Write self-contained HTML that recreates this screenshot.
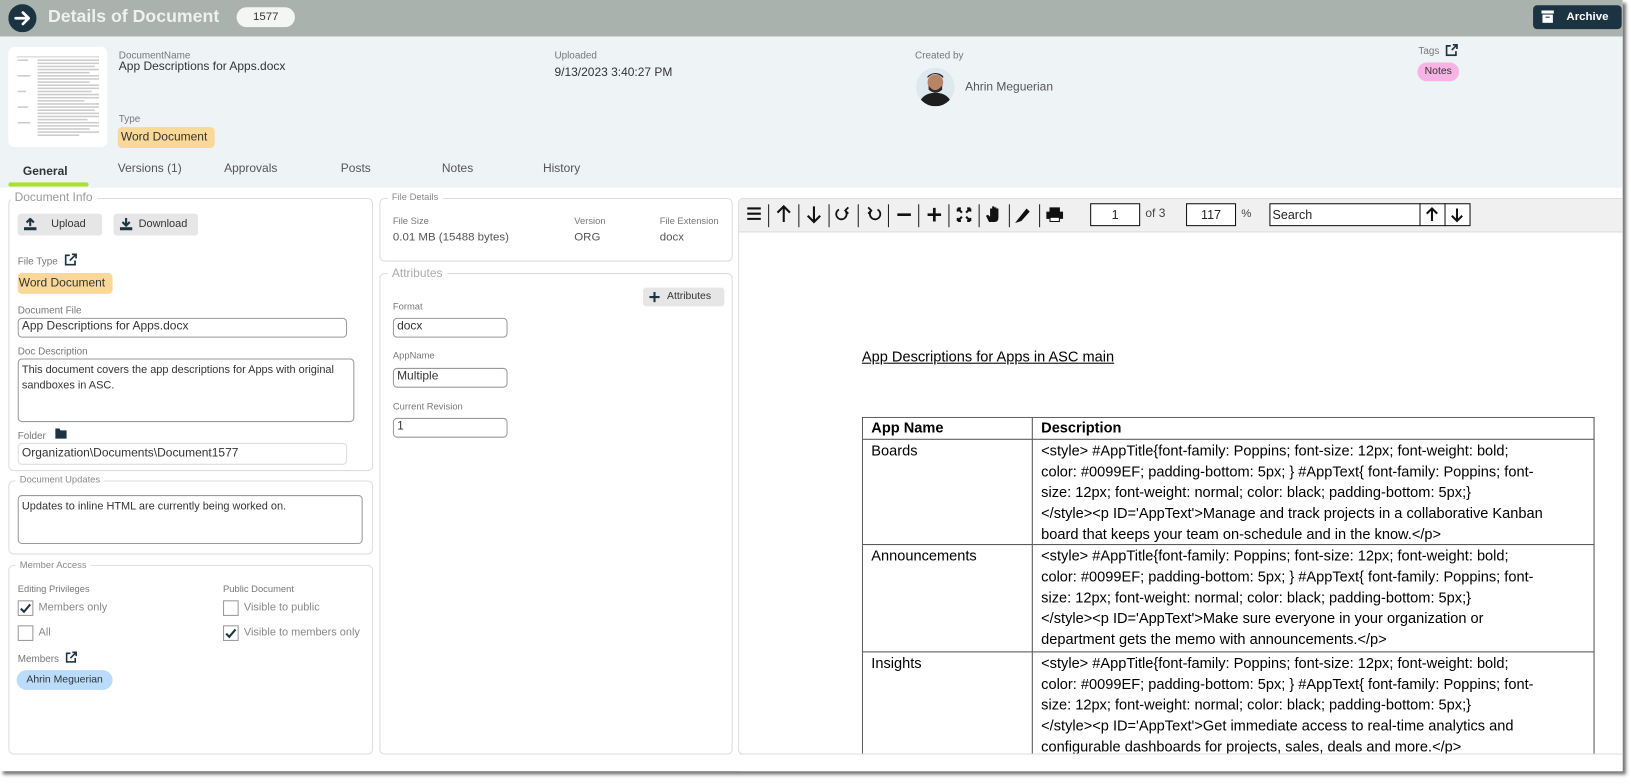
<!DOCTYPE html>
<html><head><meta charset="utf-8"><style>
*{box-sizing:border-box;margin:0;padding:0}
html,body{width:1631px;height:784px;overflow:hidden;background:#fff;font-family:"Liberation Sans",sans-serif;color:#333}
#w{position:absolute;left:0;top:0;width:1565px;height:752px;transform:scale(1.0422);transform-origin:0 0}
.a{position:absolute}
#frame{position:absolute;left:0;top:0;width:1557px;height:740px;background:#fff;box-shadow:3px 3px 3px #777;overflow:hidden}
.lbl{position:absolute;font-size:9.5px;color:#777;white-space:nowrap}
.val{position:absolute;font-size:12px;color:#333;white-space:nowrap}
.box{position:absolute;border:1px solid #ddd;border-radius:5px}
.lg{position:absolute;background:#fff;padding:0 4px;font-size:9.5px;color:#888;white-space:nowrap}
.inp{position:absolute;border:1px solid #999;border-radius:4px;font-size:11.5px;padding:1px 3px;color:#333;white-space:nowrap;background:#fff}
.btn{position:absolute;background:#e6e6e6;border-radius:3px;font-size:10.5px;color:#333}
.chk{position:absolute;width:15px;height:15px;border:1px solid #999;background:#fff}
td,th{border:1.5px solid #555;vertical-align:top;text-align:left;padding:0 8px;font-size:14px;line-height:20px;white-space:nowrap}
</style></head><body><div id="w"><div id="frame">
<div class="a" style="left:0;top:0;width:1557px;height:35px;background:#a9b2ac"></div>
<svg class="a" style="left:8px;top:4px" width="27" height="27" viewBox="0 0 27 27"><circle cx="13.5" cy="13.5" r="13.5" fill="#1c3341"/><path d="M7 13.5h12M14 8l5.5 5.5L14 19" stroke="#fff" stroke-width="2.6" fill="none" stroke-linecap="round" stroke-linejoin="round"/></svg>
<div class="a" style="left:46px;top:6px;font-size:17px;font-weight:bold;color:#eef1f0">Details of Document</div>
<div class="a" style="left:227px;top:7px;width:56px;height:19px;background:#f4f6f6;border-radius:10px;font-size:11px;text-align:center;line-height:19px;color:#333">1577</div>
<div class="a" style="left:1471px;top:5px;width:85px;height:23px;background:#1c3341;border-radius:4px"></div>
<svg class="a" style="left:1479px;top:10px" width="12" height="12"><rect x="0" y="0" width="12" height="3" fill="#fff"/><rect x="1" y="4" width="10" height="8" fill="#fff"/><rect x="4" y="6" width="4" height="1" fill="#1c3341"/></svg>
<div class="a" style="left:1503px;top:10px;font-size:11px;font-weight:bold;color:#fff">Archive</div>
<div class="a" style="left:0;top:35px;width:1557px;height:145px;background:#eef3f6"></div>
<div class="a" style="left:8px;top:45px;width:95px;height:96px;background:#fff;border-radius:6px;padding:9px 8px">
<svg width="79" height="80"><g fill="#ccc"><rect x="0" y="0" width="79" height="1"/>
<rect x="20" y="3" width="59" height="1.5"/><rect x="20" y="6" width="59" height="1.5"/><rect x="20" y="9" width="55" height="1.5"/><rect x="20" y="12" width="59" height="1.5"/><rect x="20" y="15" width="50" height="1.5"/><rect x="20" y="18" width="59" height="1.5"/><rect x="20" y="21" width="59" height="1.5"/><rect x="20" y="24" width="50" height="1.5"/><rect x="20" y="27" width="59" height="1.5"/><rect x="20" y="30" width="59" height="1.5"/><rect x="20" y="33" width="52" height="1.5"/><rect x="20" y="36" width="59" height="1.5"/><rect x="20" y="39" width="59" height="1.5"/><rect x="20" y="42" width="45" height="1.5"/><rect x="20" y="45" width="59" height="1.5"/><rect x="20" y="48" width="59" height="1.5"/><rect x="20" y="51" width="55" height="1.5"/><rect x="20" y="54" width="59" height="1.5"/><rect x="20" y="57" width="59" height="1.5"/><rect x="20" y="60" width="48" height="1.5"/><rect x="20" y="63" width="59" height="1.5"/><rect x="20" y="66" width="59" height="1.5"/><rect x="20" y="69" width="50" height="1.5"/><rect x="20" y="72" width="59" height="1.5"/><rect x="20" y="75" width="40" height="1.5"/>
<rect x="1" y="3" width="10" height="1.5"/><rect x="1" y="18" width="12" height="1.5"/><rect x="1" y="33" width="8" height="1.5"/><rect x="1" y="48" width="10" height="1.5"/><rect x="1" y="63" width="12" height="1.5"/></g></svg></div>
<div class="lbl" style="left:114px;top:48px">DocumentName</div>
<div class="val" style="left:114px;top:58px;font-size:11.5px">App Descriptions for Apps.docx</div>
<div class="lbl" style="left:114px;top:109px">Type</div>
<div class="a" style="left:113px;top:122px;width:93px;height:20px;background:#fad898;border-radius:4px;font-size:11.5px;line-height:20px;padding-left:3px">Word Document</div>
<div class="lbl" style="left:532px;top:48px">Uploaded</div>
<div class="val" style="left:532px;top:64px;font-size:11.5px">9/13/2023 3:40:27 PM</div>
<div class="lbl" style="left:878px;top:48px">Created by</div>
<svg class="a" style="left:879px;top:65px" width="37" height="37"><defs><clipPath id="c"><circle cx="18.5" cy="18.5" r="18.5"/></clipPath></defs><g clip-path="url(#c)"><rect width="37" height="37" fill="#dde8ef"/><circle cx="18.5" cy="14" r="7.5" fill="#b98466"/><path d="M11 10q7-8 15 0v-2q-7-6-15 0z" fill="#222"/><path d="M12 17q6 9 13 0v4q-6 6-13 0z" fill="#2a2a2a"/><path d="M2 37q3-13 16.5-13T35 37z" fill="#1e1e1e"/></g></svg>
<div class="val" style="left:926px;top:78px;font-size:11.5px;color:#555">Ahrin Meguerian</div>
<div class="lbl" style="left:1361px;top:44px">Tags</div>
<svg class="a" style="left:1387px;top:42px" width="12" height="12" viewBox="0 0 12 12"><path d="M5 2H1v9h9V7" stroke="#1c3341" stroke-width="1.6" fill="none"/><path d="M6 6l5-5M7 1h4v4" stroke="#1c3341" stroke-width="1.6" fill="none"/></svg>
<div class="a" style="left:1360px;top:60px;width:40px;height:18px;background:#f6b3e3;border-radius:9px;font-size:10px;text-align:center;line-height:18px">Notes</div>
<div class="a" style="left:22px;top:159px;font-size:11.5px;font-weight:bold;color:#333">General</div>
<div class="a" style="left:8px;top:175px;width:77px;height:4px;background:#a8e22c;border-radius:2px"></div>
<div class="a" style="left:113px;top:156px;font-size:11.5px;color:#555">Versions (1)</div>
<div class="a" style="left:215px;top:156px;font-size:11.5px;color:#555">Approvals</div>
<div class="a" style="left:327px;top:156px;font-size:11.5px;color:#555">Posts</div>
<div class="a" style="left:424px;top:156px;font-size:11.5px;color:#555">Notes</div>
<div class="a" style="left:521px;top:156px;font-size:11.5px;color:#555">History</div>

<div class="box" style="left:8px;top:190px;width:350px;height:262px"></div>
<div class="lg" style="left:10px;top:184px;font-size:11.5px;color:#999">Document Info</div>
<div class="btn" style="left:17px;top:205px;width:81px;height:21px"><svg class="a" style="left:6px;top:4px" width="12" height="12"><path d="M6 1v7M2.5 4.5L6 1l3.5 3.5" stroke="#1c3341" stroke-width="2" fill="none"/><rect x="0" y="9" width="12" height="3" fill="#1c3341"/></svg><span class="a" style="left:32px;top:4px">Upload</span></div>
<div class="btn" style="left:109px;top:205px;width:81px;height:21px"><svg class="a" style="left:6px;top:4px" width="12" height="12"><path d="M6 0v7M2.5 4L6 7.5 9.5 4" stroke="#1c3341" stroke-width="2" fill="none"/><rect x="0" y="9" width="12" height="3" fill="#1c3341"/></svg><span class="a" style="left:24px;top:4px">Download</span></div>
<div class="lbl" style="left:17px;top:246px">File Type</div>
<svg class="a" style="left:62px;top:243px" width="12" height="12" viewBox="0 0 12 12"><path d="M5 2H1v9h9V7" stroke="#1c3341" stroke-width="1.6" fill="none"/><path d="M5 7l6-6" stroke="#1c3341" stroke-width="1.6"/><path d="M7 1h4v4" stroke="#1c3341" stroke-width="1.6" fill="none"/></svg>
<div class="a" style="left:17px;top:262px;width:91px;height:20px;background:#fad898;border-radius:4px;font-size:11.5px;line-height:20px;padding-left:1px">Word Document</div>
<div class="lbl" style="left:17px;top:293px">Document File</div>
<div class="inp" style="left:17px;top:305px;width:316px;height:19px">App Descriptions for Apps.docx</div>
<div class="lbl" style="left:17px;top:332px">Doc Description</div>
<div class="inp" style="left:17px;top:344px;width:323px;height:61px;font-size:10.5px;line-height:15px;white-space:normal;padding-top:3px">This document covers the app descriptions for Apps with original sandboxes in ASC.</div>
<div class="lbl" style="left:17px;top:413px">Folder</div>
<svg class="a" style="left:53px;top:411px" width="11" height="10"><path d="M0 0h4l1 2h6v8H0z" fill="#1c3341"/></svg>
<div class="inp" style="left:17px;top:425px;width:316px;height:21px;border-color:#ddd;line-height:17px">Organization\Documents\Document1577</div>
<div class="box" style="left:8px;top:461px;width:350px;height:71px"></div>
<div class="lg" style="left:15px;top:455px;font-size:9px">Document Updates</div>
<div class="inp" style="left:17px;top:475px;width:331px;height:47px;font-size:10.5px;padding-top:4px">Updates to inline HTML are currently being worked on.</div>
<div class="box" style="left:8px;top:542px;width:350px;height:182px"></div>
<div class="lg" style="left:15px;top:537px;font-size:9px">Member Access</div>
<div class="lbl" style="left:17px;top:560px;font-size:9px">Editing Privileges</div>
<div class="lbl" style="left:214px;top:560px;font-size:9px">Public Document</div>
<div class="chk" style="left:17px;top:576px"><svg width="13" height="13" style="position:absolute;left:0;top:0"><path d="M2 7l3 3 6-7" stroke="#1c3341" stroke-width="2" fill="none"/></svg></div>
<div class="lbl" style="left:37px;top:577px;font-size:10.5px;color:#888">Members only</div>
<div class="chk" style="left:17px;top:600px"></div>
<div class="lbl" style="left:37px;top:601px;font-size:10.5px;color:#888">All</div>
<div class="chk" style="left:214px;top:576px"></div>
<div class="lbl" style="left:234px;top:577px;font-size:10.5px;color:#888">Visible to public</div>
<div class="chk" style="left:214px;top:600px"><svg width="13" height="13" style="position:absolute;left:0;top:0"><path d="M2 7l3 3 6-7" stroke="#1c3341" stroke-width="2" fill="none"/></svg></div>
<div class="lbl" style="left:234px;top:601px;font-size:10.5px;color:#888">Visible to members only</div>
<div class="lbl" style="left:17px;top:627px">Members</div>
<svg class="a" style="left:63px;top:625px" width="11" height="11" viewBox="0 0 12 12"><path d="M5 2H1v9h9V7" stroke="#1c3341" stroke-width="1.7" fill="none"/><path d="M5 7l6-6M7 1h4v4" stroke="#1c3341" stroke-width="1.7" fill="none"/></svg>
<div class="a" style="left:16px;top:643px;width:92px;height:19px;background:#b9dcfa;border-radius:10px;font-size:10px;text-align:center;line-height:19px">Ahrin Meguerian</div>

<div class="box" style="left:364px;top:190px;width:339px;height:61px"></div>
<div class="lg" style="left:372px;top:184px;font-size:9px">File Details</div>
<div class="lbl" style="left:377px;top:207px;font-size:9px">File Size</div>
<div class="val" style="left:377px;top:222px;font-size:11px;color:#555">0.01 MB (15488 bytes)</div>
<div class="lbl" style="left:551px;top:207px;font-size:9px">Version</div>
<div class="val" style="left:551px;top:222px;font-size:11px;color:#555">ORG</div>
<div class="lbl" style="left:633px;top:207px;font-size:9px">File Extension</div>
<div class="val" style="left:633px;top:222px;font-size:11px;color:#555">docx</div>
<div class="box" style="left:364px;top:262px;width:339px;height:462px"></div>
<div class="lg" style="left:372px;top:257px;font-size:11.5px;color:#aaa">Attributes</div>
<div class="btn" style="left:617px;top:276px;width:78px;height:18px;font-size:10px"><svg class="a" style="left:6px;top:4px" width="10" height="10"><path d="M5 0v10M0 5h10" stroke="#1c3341" stroke-width="2"/></svg><span class="a" style="left:23px;top:3px">Attributes</span></div>
<div class="lbl" style="left:377px;top:289px;font-size:9px">Format</div>
<div class="inp" style="left:377px;top:305px;width:110px;height:19px">docx</div>
<div class="lbl" style="left:377px;top:336px;font-size:9px">AppName</div>
<div class="inp" style="left:377px;top:353px;width:110px;height:19px">Multiple</div>
<div class="lbl" style="left:377px;top:385px;font-size:9px">Current Revision</div>
<div class="inp" style="left:377px;top:401px;width:110px;height:19px">1</div>

<div class="box" style="left:708px;top:190px;width:849px;height:534px;border-right:none;border-radius:5px 0 0 5px;overflow:hidden">
<div class="a" style="left:0;top:0;width:849px;height:32px;background:#f0f0f0;border-bottom:1px solid #ddd"></div>
<div class="a" style="left:2px;top:33px;width:847px;height:501px;background:#fff"></div>
</div>
<svg class="a" style="left:0;top:0" width="1557" height="230">
<g stroke="#111" fill="none" stroke-width="2">
<path d="M717 200h13M717 205h13M717 210h13"/>
<path d="M752 213V199M746 204l6-6 6 6"/>
<path d="M781 198v14M775 207l6 6 6-6"/>
<path d="M805 201a5 5 0 1 0 6 1M814 199l-3 3 3 3" stroke-width="1.7"/>
<path d="M842 201a5 5 0 1 1-6 1M833 199l3 3-3 3" stroke-width="1.7"/>
<path d="M861 206h13" stroke-width="2.6"/>
<path d="M890 206h13M896.5 199.5v13" stroke-width="2.6"/>
<path d="M919 200l4 4M931 200l-4 4M919 212l4-4M931 212l-4-4M919 200h3M919 200v3M931 200h-3M931 200v3M919 212h3M919 212v-3M931 212h-3M931 212v-3"/>
</g>
<path d="M949 213l-3-6 2-1 2 2v-8h2v5-7h2v7-6h2v6-5h2v9q0 4-4 4z" fill="#111"/>
<path d="M977 210l8-10 3 3-8 9zM974 214l3-4 3 2z" fill="#111"/>
<path d="M1007 199h10v4h-10zM1004 203h16v7h-16zM1007 208h10v5h-10z" fill="#111"/><rect x="1008" y="209" width="8" height="3" fill="#fff"/>
<g fill="#222"><rect x="737" y="196" width="1" height="22"/><rect x="766" y="196" width="1" height="22"/><rect x="795" y="196" width="1" height="22"/><rect x="823" y="196" width="1" height="22"/><rect x="852" y="196" width="1" height="22"/><rect x="881" y="196" width="1" height="22"/><rect x="910" y="196" width="1" height="22"/><rect x="939" y="196" width="1" height="22"/><rect x="968" y="196" width="1" height="22"/><rect x="997" y="196" width="1" height="22"/></g>
<rect x="1046.5" y="195.5" width="47" height="21" fill="#fff" stroke="#111"/>
<rect x="1138.5" y="195.5" width="47" height="21" fill="#fff" stroke="#111"/>
<rect x="1218.5" y="195.5" width="192" height="21" fill="#fff" stroke="#111"/>
<path d="M1362.5 195v22M1386.5 195v22" stroke="#111"/>
<path d="M1374 212v-11M1369 205l5-5 5 5M1398 200v11M1393 207l5 5 5-5" stroke="#111" stroke-width="2" fill="none"/>
</svg>
<div class="a" style="left:1046px;top:199px;width:48px;text-align:center;font-size:12px;color:#222">1</div>
<div class="a" style="left:1099px;top:199px;font-size:11.5px;color:#444">of 3</div>
<div class="a" style="left:1138px;top:199px;width:48px;text-align:center;font-size:12px;color:#222">117</div>
<div class="a" style="left:1191px;top:199px;font-size:11px;color:#444">%</div>
<div class="a" style="left:1221px;top:199px;font-size:12px;color:#222">Search</div>
<div class="a" style="left:827px;top:334px;font-size:14px;text-decoration:underline;color:#000;white-space:nowrap">App Descriptions for Apps in ASC main</div>
<div class="a" style="left:827px;top:400px;width:704px;height:340px;overflow:hidden">
<table style="border-collapse:collapse;width:703px;color:#000">
<tr><th style="width:163px;height:21px;line-height:18px">App Name</th><th style="line-height:18px">Description</th></tr>
<tr><td style="height:100px">Boards</td><td>&lt;style&gt; #AppTitle{font-family: Poppins; font-size: 12px; font-weight: bold;<br>color: #0099EF; padding-bottom: 5px; } #AppText{ font-family: Poppins; font-<br>size: 12px; font-weight: normal; color: black; padding-bottom: 5px;}<br>&lt;/style&gt;&lt;p ID='AppText'&gt;Manage and track projects in a collaborative Kanban<br>board that keeps your team on-schedule and in the know.&lt;/p&gt;</td></tr>
<tr><td style="height:103px">Announcements</td><td>&lt;style&gt; #AppTitle{font-family: Poppins; font-size: 12px; font-weight: bold;<br>color: #0099EF; padding-bottom: 5px; } #AppText{ font-family: Poppins; font-<br>size: 12px; font-weight: normal; color: black; padding-bottom: 5px;}<br>&lt;/style&gt;&lt;p ID='AppText'&gt;Make sure everyone in your organization or<br>department gets the memo with announcements.&lt;/p&gt;</td></tr>
<tr><td>Insights</td><td>&lt;style&gt; #AppTitle{font-family: Poppins; font-size: 12px; font-weight: bold;<br>color: #0099EF; padding-bottom: 5px; } #AppText{ font-family: Poppins; font-<br>size: 12px; font-weight: normal; color: black; padding-bottom: 5px;}<br>&lt;/style&gt;&lt;p ID='AppText'&gt;Get immediate access to real-time analytics and<br>configurable dashboards for projects, sales, deals and more.&lt;/p&gt;</td></tr>
</table></div>
<div class="a" style="left:710px;top:723px;width:847px;height:17px;background:#fff;border-top:1px solid #ddd"></div>
</div></div></body></html>
